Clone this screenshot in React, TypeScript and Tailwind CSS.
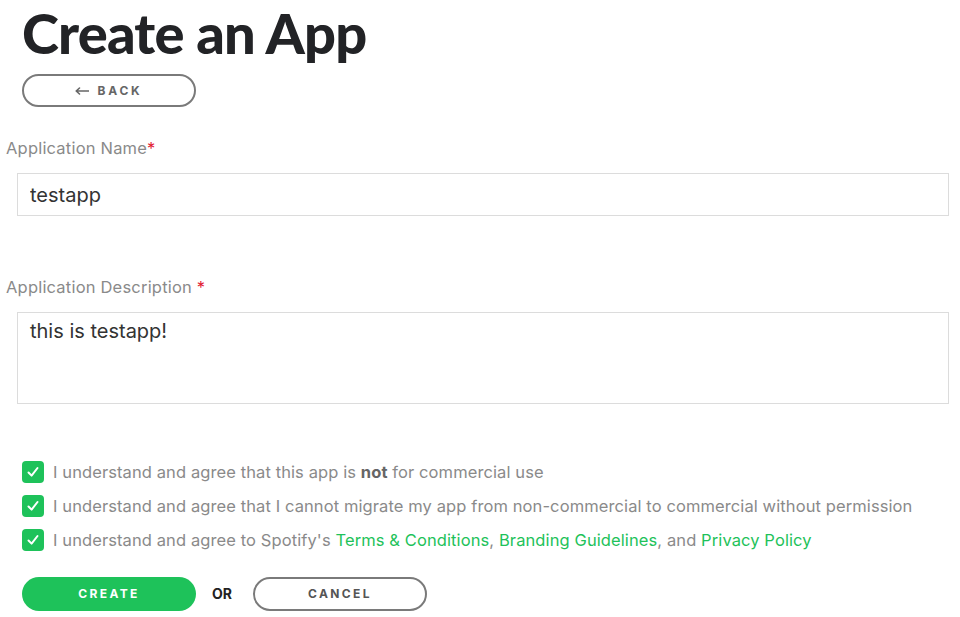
import { useState } from 'react';

function CheckRow({ children }: { children: React.ReactNode }) {
  const [checked, setChecked] = useState(true);
  return (
    <label className="flex h-[22px] cursor-pointer items-center gap-[9px]">
      <button
        type="button"
        onClick={() => setChecked((c) => !c)}
        className={`flex h-[22px] w-[22px] shrink-0 items-center justify-center rounded-[4px] ${checked ? 'bg-[#1ec25a]' : 'border border-[#bbb] bg-white'}`}
      >
        {checked && (
          <svg width="14" height="14" viewBox="0 0 14 14" fill="none">
            <path d="M2.5 7.5 L5.6 10.6 L11.5 3" stroke="white" strokeWidth="2" strokeLinecap="round" strokeLinejoin="round" />
          </svg>
        )}
      </button>
      <span className="text-[16.5px] tracking-[0.1px] text-[#8a8a8a]">{children}</span>
    </label>
  );
}

export default function App() {
  const [name, setName] = useState('testapp');
  const [description, setDescription] = useState('this is testapp!');

  return (
    <div className="min-h-[617px] w-[960px] bg-white font-['Inter','Liberation_Sans',sans-serif]">
      <div className="pl-[22px] pt-[1px]">
        <h1 className="font-['Lato',sans-serif] text-[56px] font-black leading-[64px] tracking-[-0.8px] text-[#222326]">
          Create an App
        </h1>
        <button
          type="button"
          className="mt-[9px] flex h-[33px] w-[174px] items-center justify-center gap-[8px] rounded-full border-2 border-[#7a7a7a] text-[12px] font-bold tracking-[2.8px] text-[#666]"
        >
          <svg width="14" height="8" viewBox="0 0 14 8" fill="none">
            <path d="M13.5 4 H1.5 M4.5 1 L1.2 4 L4.5 7" stroke="#666" strokeWidth="1.6" strokeLinecap="round" strokeLinejoin="round" />
          </svg>
          BACK
        </button>
      </div>

      <div className="px-[6px]">
        <label className="mt-[31px] block text-[16.5px] leading-[20px] tracking-[0.2px] text-[#8a8a8a]">
          Application Name<span className="text-[#e22134]">*</span>
        </label>
        <div className="pl-[11px] pr-[5px] pt-[15px]">
          <input
            value={name}
            onChange={(e) => setName(e.target.value)}
            className="h-[43px] w-full border border-[#dcdcdc] px-[12px] text-[20px] text-[#333] outline-none"
          />
        </div>

        <label className="mt-[61px] block text-[16.5px] leading-[20px] tracking-[0.2px] text-[#8a8a8a]">
          Application Description <span className="text-[#e22134]">*</span>
        </label>
        <div className="pl-[11px] pr-[5px] pt-[15px]">
          <textarea
            value={description}
            onChange={(e) => setDescription(e.target.value)}
            className="block h-[92px] w-full resize-none border border-[#dcdcdc] px-[12px] py-[4px] text-[20px] leading-[28px] text-[#333] outline-none"
          />
        </div>
      </div>

      <div className="mt-[57px] flex flex-col gap-[12px] pl-[22px]">
        <CheckRow>
          I understand and agree that this app is <b className="font-bold text-[#666]">not</b> for commercial use
        </CheckRow>
        <CheckRow>
          I understand and agree that I cannot migrate my app from non-commercial to commercial without permission
        </CheckRow>
        <CheckRow>
          I understand and agree to Spotify's <a className="text-[#1ec25a]">Terms &amp; Conditions</a>,{' '}
          <a className="text-[#1ec25a]">Branding Guidelines</a>, and <a className="text-[#1ec25a]">Privacy Policy</a>
        </CheckRow>
      </div>

      <div className="mt-[26px] flex items-center pl-[22px]">
        <button
          type="button"
          className="flex h-[34px] w-[174px] items-center justify-center rounded-full bg-[#1ec25a] text-[12px] font-bold tracking-[2.4px] text-white"
        >
          CREATE
        </button>
        <span className="mb-[2px] ml-[16px] mr-[21px] text-[14px] font-bold text-[#222]">OR</span>
        <button
          type="button"
          className="flex h-[34px] w-[174px] items-center justify-center rounded-full border-2 border-[#7a7a7a] text-[12px] font-bold tracking-[2.4px] text-[#555]"
        >
          CANCEL
        </button>
      </div>
    </div>
  );
}
